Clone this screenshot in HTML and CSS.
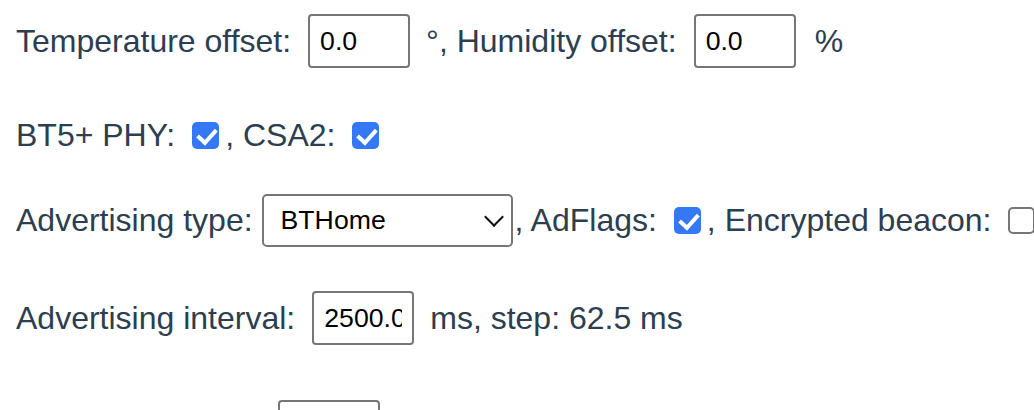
FILE: index.html
```html
<!DOCTYPE html>
<html lang="en">
<head>
    <meta charset="UTF-8">
    <meta name="viewport" content="width=device-width, initial-scale=1.0">
    <title>Device settings</title>
    <link rel="stylesheet" href="styles.css">
</head>
<body>

    <div class="settings">
        <!-- Offsets -->
        <div class="row row-offsets">
            <span>Temperature offset:</span>
            <input type="text" class="num" id="temp-offset" value="0.0">
            <span class="after">°, Humidity offset:</span>
            <input type="text" class="num" id="hum-offset" value="0.0">
            <span class="after unit">%</span>
        </div>

        <!-- Radio options -->
        <div class="row row-phy">
            <span>BT5+ PHY:</span>
            <input type="checkbox" class="chk" id="phy" checked>
            <span>, CSA2:</span>
            <input type="checkbox" class="chk" id="csa2" checked>
        </div>

        <!-- Advertising -->
        <div class="row row-adv">
            <span>Advertising type:</span>
            <span class="select-wrap">
                <select id="adv-type">
                    <option>BTHome</option>
                    <option>pvvx</option>
                    <option>Mi</option>
                    <option>atc1441</option>
                </select>
            </span>
            <span>, AdFlags:</span>
            <input type="checkbox" class="chk" id="adflags" checked>
            <span>, Encrypted beacon:</span>
            <input type="checkbox" class="chk" id="encrypt">
        </div>

        <div class="row row-interval">
            <span>Advertising interval:</span>
            <input type="text" class="num" id="adv-interval" value="2500.0">
            <span class="after">ms, step: 62.5 ms</span>
        </div>

        <!-- next row, only its field shows above the fold -->
        <div class="row row-measure">
            <input type="text" class="num" id="measure" value="4">
        </div>
    </div>

</body>
</html>
```

FILE: styles.css
```css
* {
    margin: 0;
    padding: 0;
    box-sizing: border-box;
}
body {
    font-family: 'Liberation Sans', Arial, sans-serif;
    font-size: 32px;
    color: #2c3e50;
    background: #fff;
    overflow: hidden;
}
.settings {
    padding: 14px 0 0 16px;
}
.row {
    display: flex;
    align-items: center;
    height: 54px;
    white-space: nowrap;
}
.row-phy {
    margin-top: 40px;
}
.row-adv {
    margin-top: 31px;
}
.row-interval {
    margin-top: 44px;
}
.row-measure {
    margin-top: 55px;
    align-items: flex-start;
}
.num {
    width: 102px;
    height: 54px;
    margin: 0 0 0 17px;
    padding: 0 10px;
    border: 2px solid #767676;
    border-radius: 4px;
    font-family: 'Liberation Sans', Arial, sans-serif;
    font-size: 26.67px;
    color: #000;
    background: #fff;
    outline: none;
}
#measure {
    margin-left: 262px;
}
.after {
    margin-left: 16px;
}
.unit {
    margin-left: 19px;
}
.chk {
    appearance: none;
    -webkit-appearance: none;
    position: relative;
    width: 27px;
    height: 27px;
    margin: 0 6px 0 17px;
    border: 2px solid #767676;
    border-radius: 5px;
    background: #fff;
    flex: none;
}
.chk:checked {
    border: none;
    background: #3478f6;
}
.chk:checked::after {
    content: "";
    position: absolute;
    left: 9px;
    top: 3px;
    width: 8px;
    height: 15px;
    border-right: 4px solid #fff;
    border-bottom: 4px solid #fff;
    transform: rotate(42deg);
}
.select-wrap {
    position: relative;
    margin-left: 9px;
    margin-right: 2px;
}
.select-wrap select {
    appearance: none;
    -webkit-appearance: none;
    display: block;
    width: 251px;
    height: 53px;
    padding: 0 40px 0 17px;
    border: 2px solid #767676;
    border-radius: 5px;
    font-family: 'Liberation Sans', Arial, sans-serif;
    font-size: 26.67px;
    color: #000;
    background: #fff;
    outline: none;
}
.select-wrap::after {
    content: "";
    position: absolute;
    right: 12px;
    top: 16px;
    width: 12px;
    height: 12px;
    border-right: 2px solid #111;
    border-bottom: 2px solid #111;
    transform: rotate(45deg);
    pointer-events: none;
}
```
